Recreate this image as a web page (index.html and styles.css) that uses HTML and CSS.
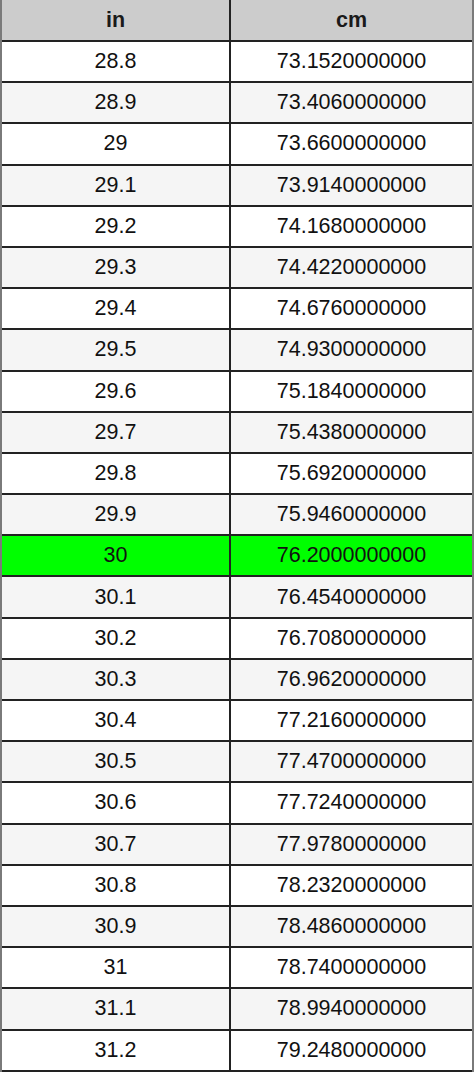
FILE: index.html
```html
<!DOCTYPE html>
<html>
<head>
<meta charset="utf-8">
<link rel="stylesheet" href="styles.css">
</head>
<body>
<div class="table">
  <div class="row head"><div class="cell c1">in</div><div class="cell c2">cm</div></div>
  <div class="row"><div class="cell c1">28.8</div><div class="cell c2">73.1520000000</div></div>
  <div class="row alt"><div class="cell c1">28.9</div><div class="cell c2">73.4060000000</div></div>
  <div class="row"><div class="cell c1">29</div><div class="cell c2">73.6600000000</div></div>
  <div class="row alt"><div class="cell c1">29.1</div><div class="cell c2">73.9140000000</div></div>
  <div class="row"><div class="cell c1">29.2</div><div class="cell c2">74.1680000000</div></div>
  <div class="row alt"><div class="cell c1">29.3</div><div class="cell c2">74.4220000000</div></div>
  <div class="row"><div class="cell c1">29.4</div><div class="cell c2">74.6760000000</div></div>
  <div class="row alt"><div class="cell c1">29.5</div><div class="cell c2">74.9300000000</div></div>
  <div class="row"><div class="cell c1">29.6</div><div class="cell c2">75.1840000000</div></div>
  <div class="row alt"><div class="cell c1">29.7</div><div class="cell c2">75.4380000000</div></div>
  <div class="row"><div class="cell c1">29.8</div><div class="cell c2">75.6920000000</div></div>
  <div class="row alt"><div class="cell c1">29.9</div><div class="cell c2">75.9460000000</div></div>
  <div class="row hl"><div class="cell c1">30</div><div class="cell c2">76.2000000000</div></div>
  <div class="row alt"><div class="cell c1">30.1</div><div class="cell c2">76.4540000000</div></div>
  <div class="row"><div class="cell c1">30.2</div><div class="cell c2">76.7080000000</div></div>
  <div class="row alt"><div class="cell c1">30.3</div><div class="cell c2">76.9620000000</div></div>
  <div class="row"><div class="cell c1">30.4</div><div class="cell c2">77.2160000000</div></div>
  <div class="row alt"><div class="cell c1">30.5</div><div class="cell c2">77.4700000000</div></div>
  <div class="row"><div class="cell c1">30.6</div><div class="cell c2">77.7240000000</div></div>
  <div class="row alt"><div class="cell c1">30.7</div><div class="cell c2">77.9780000000</div></div>
  <div class="row"><div class="cell c1">30.8</div><div class="cell c2">78.2320000000</div></div>
  <div class="row alt"><div class="cell c1">30.9</div><div class="cell c2">78.4860000000</div></div>
  <div class="row"><div class="cell c1">31</div><div class="cell c2">78.7400000000</div></div>
  <div class="row alt"><div class="cell c1">31.1</div><div class="cell c2">78.9940000000</div></div>
  <div class="row"><div class="cell c1">31.2</div><div class="cell c2">79.2480000000</div></div>
</div>
</body>
</html>
```
FILE: styles.css
```css
html, body {
  margin: 0;
  padding: 0;
  background: #ffffff;
}
.table {
  width: 474px;
  box-sizing: border-box;
  border-left: 2px solid #7a7a7a;
  border-right: 2px solid #7a7a7a;
  font-family: "Liberation Sans", Arial, sans-serif;
  font-size: 21.5px;
  color: #111111;
}
.row {
  display: flex;
  height: 41.2px;
  box-sizing: border-box;
  border-bottom: 2px solid #222222;
  background: #ffffff;
}
.row.head {
  height: 42px;
  background: #cccccc;
  font-weight: bold;
  color: #1a1a1a;
}
.row.alt {
  background: #f5f5f5;
}
.row.hl {
  background: #00ff00;
}
.cell {
  display: flex;
  align-items: center;
  justify-content: center;
}
.c1 {
  width: 227px;
  border-right: 2px solid #222222;
}
.c2 {
  flex: 1;
}
```
